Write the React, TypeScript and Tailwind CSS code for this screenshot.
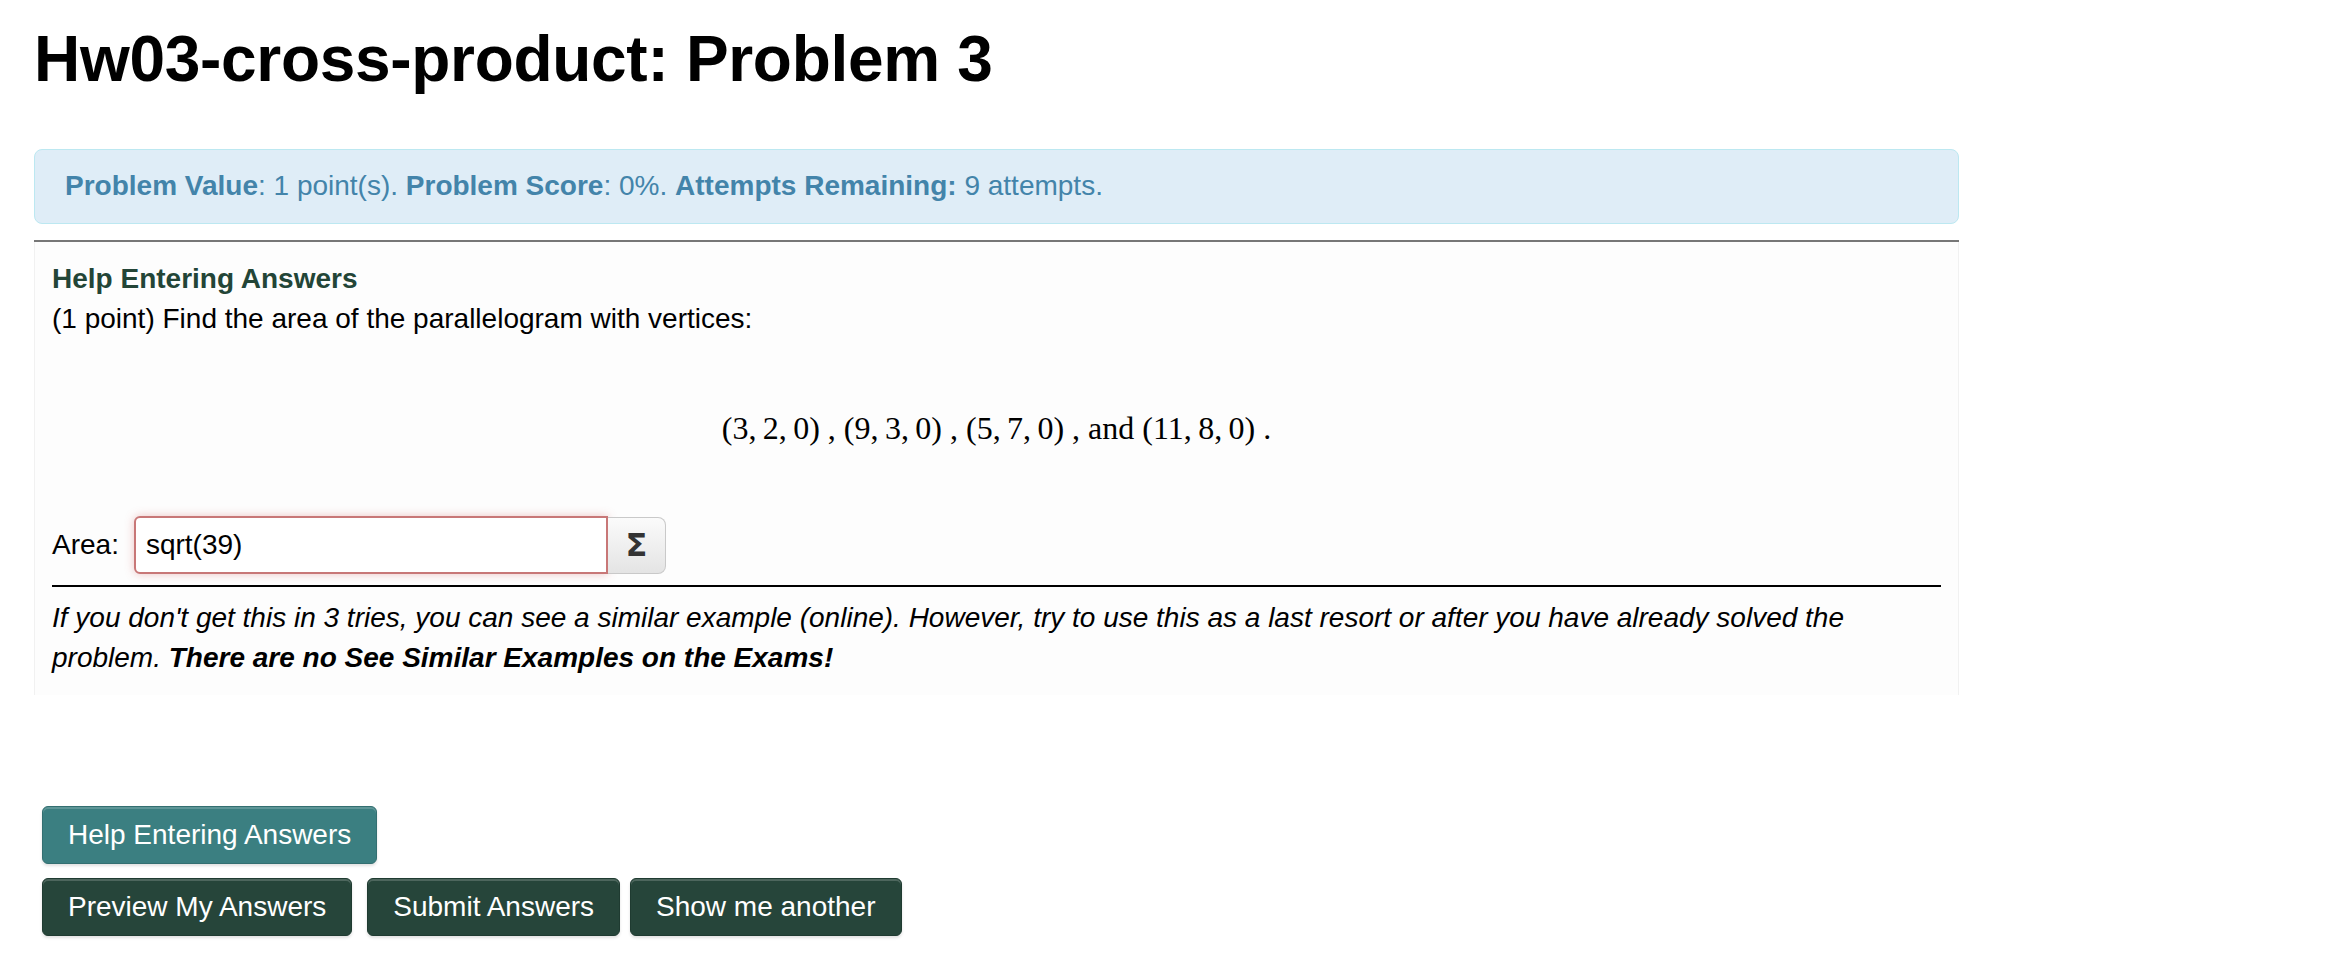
import React from "react";

const btnBase =
  "inline-flex h-[58px] items-center rounded-[6px] px-[25px] text-[28px] leading-[40px] text-white border shadow-[inset_0_2px_0_rgba(255,255,255,0.18),0_2px_3px_rgba(0,0,0,0.12)]";

// thin spaces inside the coordinate triples, like the typeset math
function Triple({ v }: { v: string[] }) {
  return <span>({v.join(",\u2009")})</span>;
}

export default function App() {
  return (
    <div className="min-h-screen bg-white font-['Liberation_Sans',Arial,sans-serif] text-[28px] leading-[40px] text-black">
      <div className="ml-[34px] w-[1925px] pt-[24px]">
        <h1 className="text-[64px] font-bold leading-[70px] tracking-[-0.3px]">
          Hw03-cross-product: Problem 3
        </h1>

        <div className="mt-[55px] h-[75px] rounded-[8px] border border-[#bce8f1] bg-[#dfedf7] pl-[30px] pt-[16px] text-[#4384aa]">
          <b>Problem Value</b>: 1 point(s). <b>Problem Score</b>: 0%.{" "}
          <b>Attempts Remaining:</b> 9 attempts.
        </div>

        <div className="mt-[16px] h-[2px] bg-[#777777]" />

        <div className="border-x border-[#f1f1f1] bg-[#fdfdfd] px-[17px] pb-[17px] pt-[17px]">
          <div className="font-bold text-[#234537]">Help Entering Answers</div>
          <div>(1 point) Find the area of the parallelogram with vertices:</div>

          <div className="mt-[69px] text-center font-['Liberation_Serif','Times_New_Roman',serif] text-[32px] leading-[40px]">
            <Triple v={["3", "2", "0"]} /> , <Triple v={["9", "3", "0"]} /> , <Triple v={["5", "7", "0"]} /> , and{" "}
            <Triple v={["11", "8", "0"]} /> .
          </div>

          <div className="mt-[68px] flex h-[58px] items-center">
            <span className="mr-[15px]">Area:</span>
            <div className="flex h-[58px] w-[474px] items-center rounded-l-[6px] border-2 border-[#c87777] bg-white pl-[10px] shadow-[0_0_10px_rgba(205,90,90,0.35)]">
              sqrt(39)
            </div>
            <div className="flex h-[57px] w-[58px] items-center justify-center rounded-r-[8px] border border-l-0 border-[#c9c9c9] bg-gradient-to-b from-[#fbfbfb] to-[#e4e4e4] font-['DejaVu_Sans',sans-serif] text-[32px] font-bold text-[#333333]">
              Σ
            </div>
          </div>

          <div className="mt-[11px] h-[2px] bg-black" />

          <p className="mt-[11px] italic">
            If you don't get this in 3 tries, you can see a similar example (online). However, try to use
            this as a last resort or after you have already solved the problem.{" "}
            <b>There are no See Similar Examples on the Exams!</b>
          </p>
        </div>

        <div className="ml-[8px] mt-[111px]">
          <button className={`${btnBase} border-[#336f71] bg-[#3b7f81]`}>Help Entering Answers</button>
          <div className="mt-[14px] flex">
            <button className={`${btnBase} border-[#1f3b31] bg-[#26453a]`}>Preview My Answers</button>
            <button className={`${btnBase} ml-[15px] border-[#1f3b31] bg-[#26453a]`}>Submit Answers</button>
            <button className={`${btnBase} ml-[10px] border-[#1f3b31] bg-[#26453a]`}>Show me another</button>
          </div>
        </div>
      </div>
    </div>
  );
}
